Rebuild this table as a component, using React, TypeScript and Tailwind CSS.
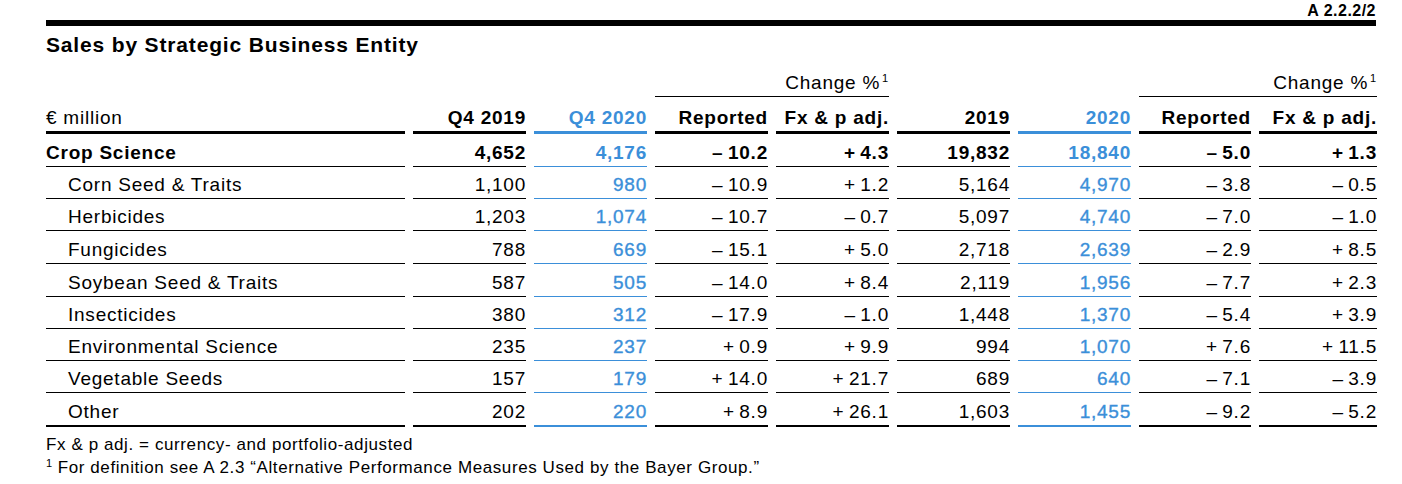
import React from 'react';

type Row = {
  label: string;
  values: string[];
  bold?: boolean;
  h: string;
  last?: boolean;
};

// heights tuned so the rules fall where the printed table has them
const rows: Row[] = [
  { label: 'Crop Science', bold: true, h: 'h-[33px]', values: ['4,652', '4,176', '-10.2', '+4.3', '19,832', '18,840', '-5.0', '+1.3'] },
  { label: 'Corn Seed & Traits', h: 'h-[32px]', values: ['1,100', '980', '-10.9', '+1.2', '5,164', '4,970', '-3.8', '-0.5'] },
  { label: 'Herbicides', h: 'h-[32px]', values: ['1,203', '1,074', '-10.7', '-0.7', '5,097', '4,740', '-7.0', '-1.0'] },
  { label: 'Fungicides', h: 'h-[33px]', values: ['788', '669', '-15.1', '+5.0', '2,718', '2,639', '-2.9', '+8.5'] },
  { label: 'Soybean Seed & Traits', h: 'h-[33px]', values: ['587', '505', '-14.0', '+8.4', '2,119', '1,956', '-7.7', '+2.3'] },
  { label: 'Insecticides', h: 'h-[32px]', values: ['380', '312', '-17.9', '-1.0', '1,448', '1,370', '-5.4', '+3.9'] },
  { label: 'Environmental Science', h: 'h-[32px]', values: ['235', '237', '+0.9', '+9.9', '994', '1,070', '+7.6', '+11.5'] },
  { label: 'Vegetable Seeds', h: 'h-[32px]', values: ['157', '179', '+14.0', '+21.7', '689', '640', '-7.1', '-3.9'] },
  { label: 'Other', h: 'h-[34px]', last: true, values: ['202', '220', '+8.9', '+26.1', '1,603', '1,455', '-9.2', '-5.2'] },
];

const BLUE_COLS = [1, 5];

// signed figures get a real en dash / plus and a thin space
const fmt = (v: string) => {
  if (v.startsWith('-')) return '\u2013\u2009' + v.slice(1);
  if (v.startsWith('+')) return '+\u2009' + v.slice(1);
  return v;
};

const ChangeHead = () => (
  <div className="col-span-2 flex items-end justify-end h-[42px] pb-[4px] border-b border-black">
    <span>
      Change %<sup className="text-[11px] relative -top-[7px] ml-[2px]">1</sup>
    </span>
  </div>
);

const App: React.FC = () => {
  return (
    <div className="w-[1402px] h-[484px] bg-white text-black font-['Liberation_Sans',Arial,sans-serif]">
      <div className="ml-[46px] w-[1330px]">
        {/* reference number + heavy rule */}
        <div className="h-[20px] flex items-end justify-end pb-[1px] text-[16px] leading-[16px] font-bold tracking-[0.03em]">
          A 2.2.2/2
        </div>
        <div className="h-[6px] bg-black" />

        <h2 className="mt-2 text-[21px] leading-[21px] font-bold tracking-[0.04em]">
          Sales by Strategic Business Entity
        </h2>

        <div className="grid grid-cols-[359px_113px_113px_113px_113px_113px_113px_112px_118px] gap-x-2 text-[19px] leading-[19px] tracking-[0.04em]">
          {/* Change % group heads */}
          <div className="h-[42px]" />
          <div className="h-[42px]" />
          <div className="h-[42px]" />
          <ChangeHead />
          <div className="h-[42px]" />
          <div className="h-[42px]" />
          <ChangeHead />

          {/* column heads */}
          <div className="h-[37px] flex items-end pb-[4px] border-b-[3px] border-black">€ million</div>
          {['Q4 2019', 'Q4 2020', 'Reported', 'Fx & p adj.', '2019', '2020', 'Reported', 'Fx & p adj.'].map((h, i) => {
            const blue = BLUE_COLS.includes(i);
            return (
              <div
                key={i}
                className={`h-[37px] flex items-end justify-end pb-[4px] border-b-[3px] font-bold ${
                  blue ? 'border-[#3b8fd9] text-[#3b8fd9]' : 'border-black'
                }`}
              >
                {h}
              </div>
            );
          })}

          {/* body */}
          {rows.map((r) => (
            <React.Fragment key={r.label}>
              <div
                className={`${r.h} flex items-end pb-[4px] border-black ${r.last ? 'border-b-2' : 'border-b'} ${
                  r.bold ? 'font-bold' : 'pl-[22px]'
                }`}
              >
                {r.label}
              </div>
              {r.values.map((v, i) => {
                const blue = BLUE_COLS.includes(i);
                return (
                  <div
                    key={i}
                    className={`${r.h} flex items-end justify-end pb-[4px] ${r.last ? 'border-b-2' : 'border-b'} ${
                      blue
                        ? 'border-[#3b8fd9] text-[#3b8fd9] [-webkit-text-stroke:0.35px_#3b8fd9]'
                        : 'border-black'
                    } ${r.bold ? 'font-bold [-webkit-text-stroke:0px]' : ''}`}
                  >
                    {fmt(v)}
                  </div>
                );
              })}
            </React.Fragment>
          ))}
        </div>

        {/* footnotes */}
        <div className="mt-[6px] text-[17px] leading-[23px] tracking-[0.035em]">
          <p>Fx &amp; p adj. = currency- and portfolio-adjusted</p>
          <p>
            <sup className="text-[11px] relative -top-[6px] mr-[5px]">1</sup>
            For definition see A 2.3 “Alternative Performance Measures Used by the Bayer Group.”
          </p>
        </div>
      </div>
    </div>
  );
};

export default App;
